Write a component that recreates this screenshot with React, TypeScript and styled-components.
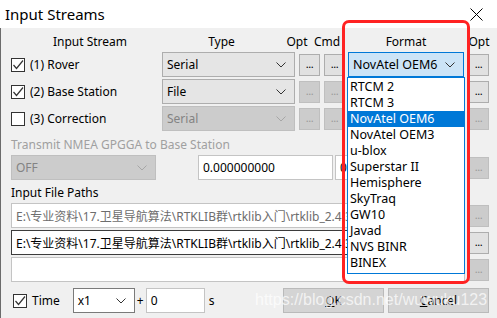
import React from 'react';
import styled, { createGlobalStyle, css } from 'styled-components';

const GlobalStyle = createGlobalStyle`
  html, body {
    margin: 0;
    padding: 0;
    background: #f0f0f0;
    overflow: hidden;
  }
  body {
    font-family: "Noto Sans", "Noto Sans CJK SC", sans-serif;
    font-size: 12px;
    color: #000;
  }
`;

const Window = styled.div`
  position: relative;
  width: 497px;
  height: 318px;
  background: #f0f0f0;
  border-left: 1px solid #6b6b6b;
  box-sizing: border-box;
`;

const TitleBar = styled.div`
  height: 28px;
  background: #fff;
  display: flex;
  align-items: center;
  justify-content: space-between;
  padding: 0 14px 0 5px;
  margin-left: -1px;
`;

const TitleText = styled.span`
  font-size: 15px;
  color: #000;
`;

const Body = styled.div`
  display: flex;
  flex-direction: column;
  padding: 5px 8px 0 10px;
`;

const StreamGrid = styled.div`
  display: grid;
  grid-template-columns: 148px 133px 22px 22px 116px 22px;
  grid-template-rows: 17px 25px 25px 25px;
  column-gap: 3px;
  row-gap: 2px;
`;

const HeadCell = styled.div<{ $shift?: number }>`
  text-align: center;
  line-height: 17px;
  white-space: nowrap;
  transform: translateX(${(p) => p.$shift || 0}px);
`;

const CheckRow = styled.label`
  display: flex;
  align-items: center;
  gap: 5px;
  white-space: nowrap;
  color: #000;
`;

const CheckBox = styled.span`
  width: 14px;
  height: 14px;
  box-sizing: border-box;
  border: 1px solid #333;
  background: #fff;
  display: flex;
  align-items: center;
  justify-content: center;
  flex-shrink: 0;
`;

const Combo = styled.div<{ $variant?: 'normal' | 'disabled' | 'focus' | 'white'; $w?: number }>`
  box-sizing: border-box;
  height: 25px;
  display: flex;
  align-items: center;
  justify-content: space-between;
  padding: 0 8px 0 4px;
  white-space: nowrap;
  width: ${(p) => (p.$w ? `${p.$w}px` : 'auto')};
  flex-shrink: 0;
  ${(p) => {
    switch (p.$variant) {
      case 'disabled':
        return css`background: #cccccc; border: 1px solid #bfbfbf; color: #838383;`;
      case 'focus':
        return css`background: #cce4f7; border: 1px solid #0078d7; color: #000;`;
      case 'white':
        return css`background: #fff; border: 1px solid #7a7a7a; color: #000;`;
      default:
        return css`background: #e5e5e5; border: 1px solid #adadad; color: #000;`;
    }
  }}
`;

const DotButton = styled.div<{ $disabled?: boolean }>`
  box-sizing: border-box;
  width: 21px;
  height: 22px;
  align-self: center;
  justify-self: end;
  flex-shrink: 0;
  display: flex;
  align-items: center;
  justify-content: center;
  font-size: 11px;
  letter-spacing: -0.5px;
  padding-bottom: 3px;
  background: ${(p) => (p.$disabled ? '#cccccc' : '#e1e1e1')};
  border: 1px solid ${(p) => (p.$disabled ? '#bfbfbf' : '#adadad')};
  color: ${(p) => (p.$disabled ? '#9a9a9a' : '#000')};
`;

const Label = styled.div<{ $disabled?: boolean; $mt: number }>`
  margin-top: ${(p) => p.$mt}px;
  height: 16px;
  line-height: 16px;
  white-space: nowrap;
  color: ${(p) => (p.$disabled ? '#a0a0a0' : '#000')};
`;

const Row = styled.div<{ $mt: number }>`
  display: flex;
  align-items: center;
  height: 25px;
  margin-top: ${(p) => p.$mt}px;
`;

const Field = styled.div<{ $w?: number; $tone?: 'normal' | 'dim' | 'active'; $ml?: number }>`
  box-sizing: border-box;
  height: 25px;
  ${(p) => (p.$w ? `width: ${p.$w}px; flex-shrink: 0;` : 'flex: 1; min-width: 0;')}
  margin-left: ${(p) => p.$ml || 0}px;
  background: #fff;
  border: 1px solid ${(p) => (p.$tone === 'active' ? '#3c3c3c' : '#c4c4c4')};
  color: ${(p) => (p.$tone === 'dim' ? '#6d6d6d' : '#000')};
  display: flex;
  align-items: center;
  padding: 0 4px;
  overflow: hidden;
  white-space: nowrap;
`;

const Spacer = styled.div<{ $w?: number }>`
  ${(p) => (p.$w !== undefined ? `width: ${p.$w}px; flex-shrink: 0;` : 'flex: 1;')}
`;

const PlainText = styled.span<{ $ml?: number }>`
  margin-left: ${(p) => p.$ml || 0}px;
  white-space: nowrap;
`;

const DialogButton = styled.div<{ $ml?: number }>`
  box-sizing: border-box;
  width: 101px;
  height: 25px;
  flex-shrink: 0;
  margin-left: ${(p) => p.$ml || 0}px;
  background: #d4d4d4;
  border: 1px solid #bababa;
  display: flex;
  align-items: center;
  justify-content: center;
  color: #000;
`;

const DropList = styled.div`
  position: absolute;
  left: 346px;
  top: 77px;
  width: 118px;
  height: 197px;
  box-sizing: border-box;
  background: #fff;
  border: 1px solid #0078d7;
  padding-top: 1px;
`;

const DropItem = styled.div<{ $selected?: boolean }>`
  height: 16px;
  line-height: 16px;
  padding-left: 2px;
  font-size: 12.5px;
  white-space: nowrap;
  background: ${(p) => (p.$selected ? '#0078d7' : 'transparent')};
  color: ${(p) => (p.$selected ? '#fff' : '#000')};
`;

const RedMark = styled.div`
  position: absolute;
  left: 341px;
  top: 20px;
  width: 128px;
  height: 264px;
  box-sizing: border-box;
  border: 3px solid #ff2222;
  border-radius: 7px;
  pointer-events: none;
`;

const Watermark = styled.div`
  position: absolute;
  left: 254px;
  top: 291px;
  font-family: "Liberation Sans", Arial, sans-serif;
  font-size: 16px;
  color: rgba(255, 255, 255, 0.72);
  white-space: nowrap;
  pointer-events: none;
`;

const Chevron = ({ color = '#333' }: { color?: string }) => (
  <svg width="10" height="6" viewBox="0 0 10 6">
    <path d="M0.5 0.5 L5 5 L9.5 0.5" fill="none" stroke={color} strokeWidth="1" />
  </svg>
);

const Check = ({ on }: { on: boolean }) => (
  <CheckBox>
    {on && (
      <svg width="12" height="12" viewBox="0 0 12 12">
        <path d="M1.5 6 L4.5 9.5 L11 1.5" fill="none" stroke="#333" strokeWidth="1.2" />
      </svg>
    )}
  </CheckBox>
);

const CloseIcon = () => (
  <svg width="13" height="13" viewBox="0 0 13 13">
    <path d="M0.5 0.5 L12.5 12.5 M12.5 0.5 L0.5 12.5" stroke="#000" strokeWidth="1" />
  </svg>
);

const streams = [
  { label: '(1) Rover', on: true, type: 'Serial', enabled: true, optOn: true, fmtOptOn: true },
  { label: '(2) Base Station', on: true, type: 'File', enabled: true, optOn: false, fmtOptOn: true },
  { label: '(3) Correction', on: false, type: 'Serial', enabled: false, optOn: false, fmtOptOn: false },
];

const formats = [
  'RTCM 2', 'RTCM 3', 'NovAtel OEM6', 'NovAtel OEM3', 'u-blox', 'Superstar II',
  'Hemisphere', 'SkyTraq', 'GW10', 'Javad', 'NVS BINR', 'BINEX',
];

const path = 'E:\\专业资料\\17.卫星导航算法\\RTKLIB群\\rtklib入门\\rtklib_2.4.3\\data\\base.obs';

const App = (): JSX.Element => (
  <>
    <GlobalStyle />
    <Window>
      <TitleBar>
        <TitleText>Input Streams</TitleText>
        <CloseIcon />
      </TitleBar>
      <Body>
        <StreamGrid>
          <HeadCell $shift={5}>Input Stream</HeadCell>
          <HeadCell $shift={-7}>Type</HeadCell>
          <HeadCell $shift={-12}>Opt</HeadCell>
          <HeadCell $shift={-9}>Cmd</HeadCell>
          <HeadCell>Format</HeadCell>
          <HeadCell $shift={1}>Opt</HeadCell>
          {streams.map((s) => (
            <React.Fragment key={s.label}>
              <CheckRow>
                <Check on={s.on} />
                {s.label}
              </CheckRow>
              <Combo $variant={s.enabled ? 'normal' : 'disabled'}>
                {s.type}
                <Chevron color={s.enabled ? '#333' : '#a6a6a6'} />
              </Combo>
              <DotButton $disabled={!s.optOn}>...</DotButton>
              <DotButton $disabled={!s.optOn}>...</DotButton>
              {s.label === '(1) Rover' ? (
                <Combo $variant="focus">
                  <span style={{ fontSize: '12.5px' }}>NovAtel OEM6</span>
                  <Chevron />
                </Combo>
              ) : (
                <div />
              )}
              <DotButton $disabled={!s.fmtOptOn}>...</DotButton>
            </React.Fragment>
          ))}
        </StreamGrid>

        <Label $mt={6} $disabled>Transmit NMEA GPGGA to Base Station</Label>
        <Row $mt={2}>
          <Combo $variant="disabled" $w={145}>
            OFF
            <Chevron color="#a6a6a6" />
          </Combo>
          <Field $w={135} $ml={42}>0.000000000</Field>
          <Field $ml={2}>0.000000000</Field>
          <Spacer $w={3} />
          <DotButton $disabled>...</DotButton>
        </Row>

        <Label $mt={5}>Input File Paths</Label>
        <Row $mt={2}>
          <Field $tone="dim">{path}</Field>
          <Spacer $w={3} />
          <DotButton $disabled>...</DotButton>
        </Row>
        <Row $mt={2}>
          <Field $tone="active">{path}</Field>
          <Spacer $w={3} />
          <DotButton>...</DotButton>
        </Row>
        <Row $mt={2}>
          <Field />
          <Spacer $w={3} />
          <DotButton $disabled>...</DotButton>
        </Row>

        <Row $mt={6}>
          <Spacer $w={2} />
          <CheckRow>
            <Check on />
            Time
          </CheckRow>
          <Spacer $w={13} />
          <Combo $variant="white" $w={62}>
            x1
            <Chevron />
          </Combo>
          <PlainText $ml={2}>+</PlainText>
          <Field $w={59} $ml={2}>0</Field>
          <PlainText $ml={4}>s</PlainText>
          <Spacer />
          <DialogButton><span><u>O</u>K</span></DialogButton>
          <DialogButton $ml={4}><span><u>C</u>ancel</span></DialogButton>
        </Row>
      </Body>

      <DropList>
        {formats.map((f) => (
          <DropItem key={f} $selected={f === 'NovAtel OEM6'}>{f}</DropItem>
        ))}
      </DropList>
      <RedMark />
      <Watermark>https://blog.csdn.net/wuwuku123</Watermark>
    </Window>
  </>
);

export default App;
